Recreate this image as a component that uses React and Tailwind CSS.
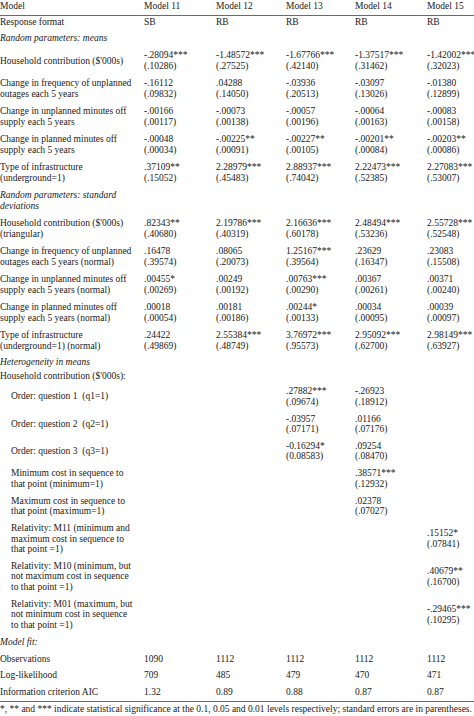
import React from 'react';

const COLS = 'grid grid-cols-[144px_72px_70px_69px_72px_47px]';
// upper sections sit a little looser than the heterogeneity / fit blocks
const LOOSE = 'leading-[11px] py-[3px]';
const TIGHT = 'leading-[10.5px] py-[3.2px]';
const COMPACT = 'leading-[11px] py-[1.5px]';

const MODELS = ['Model 11', 'Model 12', 'Model 13', 'Model 14', 'Model 15'];

const MEANS = [
  {
    label: ["Household contribution ($'000s)"],
    values: [
      ['-.28094***', '(.10286)'],
      ['-1.48572***', '(.27525)'],
      ['-1.67766***', '(.42140)'],
      ['-1.37517***', '(.31462)'],
      ['-1.42002***', '(.32023)'],
    ],
  },
  {
    label: ['Change in frequency of unplanned', 'outages each 5 years'],
    values: [
      ['-.16112', '(.09832)'],
      ['.04288', '(.14050)'],
      ['-.03936', '(.20513)'],
      ['-.03097', '(.13026)'],
      ['-.01380', '(.12899)'],
    ],
  },
  {
    label: ['Change in unplanned minutes off', 'supply each 5 years'],
    values: [
      ['-.00166', '(.00117)'],
      ['-.00073', '(.00138)'],
      ['-.00057', '(.00196)'],
      ['-.00064', '(.00163)'],
      ['-.00083', '(.00158)'],
    ],
  },
  {
    label: ['Change in planned minutes off', 'supply each 5 years'],
    values: [
      ['-.00048', '(.00034)'],
      ['-.00225**', '(.00091)'],
      ['-.00227**', '(.00105)'],
      ['-.00201**', '(.00084)'],
      ['-.00203**', '(.00086)'],
    ],
  },
  {
    label: ['Type of infrastructure', '(underground=1)'],
    values: [
      ['.37109**', '(.15052)'],
      ['2.28979***', '(.45483)'],
      ['2.88937***', '(.74042)'],
      ['2.22473***', '(.52385)'],
      ['2.27083***', '(.53007)'],
    ],
  },
];

const STDEVS = [
  {
    label: ["Household contribution ($'000s)", '(triangular)'],
    values: [
      ['.82343**', '(.40680)'],
      ['2.19786***', '(.40319)'],
      ['2.16636***', '(.60178)'],
      ['2.48494***', '(.53236)'],
      ['2.55728***', '(.52548)'],
    ],
  },
  {
    label: ['Change in frequency of unplanned', 'outages each 5 years (normal)'],
    values: [
      ['.16478', '(.39574)'],
      ['.08065', '(.20073)'],
      ['1.25167***', '(.39564)'],
      ['.23629', '(.16347)'],
      ['.23083', '(.15508)'],
    ],
  },
  {
    label: ['Change in unplanned minutes off', 'supply each 5 years (normal)'],
    values: [
      ['.00455*', '(.00269)'],
      ['.00249', '(.00192)'],
      ['.00763***', '(.00290)'],
      ['.00367', '(.00261)'],
      ['.00371', '(.00240)'],
    ],
  },
  {
    label: ['Change in planned minutes off', 'supply each 5 years (normal)'],
    values: [
      ['.00018', '(.00054)'],
      ['.00181', '(.00186)'],
      ['.00244*', '(.00133)'],
      ['.00034', '(.00095)'],
      ['.00039', '(.00097)'],
    ],
  },
  {
    label: ['Type of infrastructure', '(underground=1) (normal)'],
    values: [
      ['.24422', '(.49869)'],
      ['2.55384***', '(.48749)'],
      ['3.76972***', '(.95573)'],
      ['2.95092***', '(.62700)'],
      ['2.98149***', '(.63927)'],
    ],
  },
];

const HETERO = [
  {
    label: ['Order: question 1  (q1=1)'],
    values: [null, null, ['.27882***', '(.09674)'], ['-.26923', '(.18912)'], null],
  },
  {
    label: ['Order: question 2  (q2=1)'],
    values: [null, null, ['-.03957', '(.07171)'], ['.01166', '(.07176)'], null],
  },
  {
    label: ['Order: question 3  (q3=1)'],
    values: [null, null, ['-0.16294*', '(0.08583)'], ['.09254', '(.08470)'], null],
  },
  {
    label: ['Minimum cost in sequence to', 'that point (minimum=1)'],
    values: [null, null, null, ['.38571***', '(.12932)'], null],
  },
  {
    label: ['Maximum cost in sequence to', 'that point (maximum=1)'],
    values: [null, null, null, ['.02378', '(.07027)'], null],
  },
  {
    label: ['Relativity: M11 (minimum and', 'maximum cost in sequence to', 'that point =1)'],
    values: [null, null, null, null, ['.15152*', '(.07841)']],
  },
  {
    label: ['Relativity: M10 (minimum, but', 'not maximum cost in sequence', 'to that point =1)'],
    values: [null, null, null, null, ['.40679**', '(.16700)']],
  },
  {
    label: ['Relativity: M01 (maximum, but', 'not minimum cost in sequence', 'to that point =1)'],
    values: [null, null, null, null, ['-.29465***', '(.10295)']],
  },
];

const FIT = [
  { label: 'Observations', values: ['1090', '1112', '1112', '1112', '1112'] },
  { label: 'Log-likelihood', values: ['709', '485', '479', '470', '471'] },
  { label: 'Information criterion AIC', values: ['1.32', '0.89', '0.88', '0.87', '0.87'] },
];

function Lines({ lines }) {
  return lines.map((line, i) => (
    <span key={i} className="block whitespace-pre">
      {line}
    </span>
  ));
}

function SimpleRow({ label, values, className = TIGHT }) {
  return (
    <div className={`${COLS} ${className}`}>
      <div className="whitespace-nowrap">{label}</div>
      {values.map((v, i) => (
        <div key={i} className="whitespace-nowrap">
          {v}
        </div>
      ))}
    </div>
  );
}

function SectionRow({ children, className = TIGHT }) {
  return (
    <div className={`${COLS} ${className}`}>
      <div className="italic pr-[14px]">{children}</div>
    </div>
  );
}

function CoefRow({ label, values, indent, className = TIGHT }) {
  return (
    <div className={`${COLS} ${className}`}>
      <div className={`flex flex-col justify-center ${indent ? 'pl-[11px]' : ''}`}>
        <Lines lines={label} />
      </div>
      {values.map((v, i) => (
        <div key={i} className="flex flex-col justify-center whitespace-nowrap">
          {v && <Lines lines={v} />}
        </div>
      ))}
    </div>
  );
}

export default function App() {
  return (
    <div className="w-[474px] h-[716px] overflow-hidden bg-white text-[#202020] font-['Liberation_Serif','Times_New_Roman',serif] text-[9.5px]">
      <div className={`${COLS} leading-[11px] pt-[1px] pb-[3px] border-b border-[#6b6b6b]`}>
        <div>Model</div>
        {MODELS.map((m) => (
          <div key={m} className="whitespace-nowrap">
            {m}
          </div>
        ))}
      </div>

      <SimpleRow
        label="Response format"
        values={['SB', 'RB', 'RB', 'RB', 'RB']}
        className="leading-[11px] pt-[0.5px] pb-[2.5px]"
      />

      <SectionRow className={LOOSE}>Random parameters: means</SectionRow>
      {MEANS.map((row, i) => (
        <CoefRow key={i} className={LOOSE} {...row} />
      ))}

      <SectionRow className={LOOSE}>Random parameters: standard deviations</SectionRow>
      {STDEVS.map((row, i) => (
        <CoefRow key={i} className={LOOSE} {...row} />
      ))}

      <SectionRow className={COMPACT}>Heterogeneity in means</SectionRow>
      <SimpleRow
        label="Household contribution ($'000s):"
        values={['', '', '', '', '']}
        className={COMPACT}
      />
      {HETERO.map((row, i) => (
        <CoefRow key={i} indent {...row} />
      ))}

      <SectionRow>Model fit:</SectionRow>
      {FIT.map((row) => (
        <SimpleRow key={row.label} {...row} />
      ))}

      <div className="border-t border-[#6b6b6b] pt-[2px] leading-[11px] whitespace-nowrap text-[9.5px]">
        *, ** and *** indicate statistical significance at the 0.1, 0.05 and 0.01 levels respectively; standard errors are in parentheses.
      </div>
    </div>
  );
}
